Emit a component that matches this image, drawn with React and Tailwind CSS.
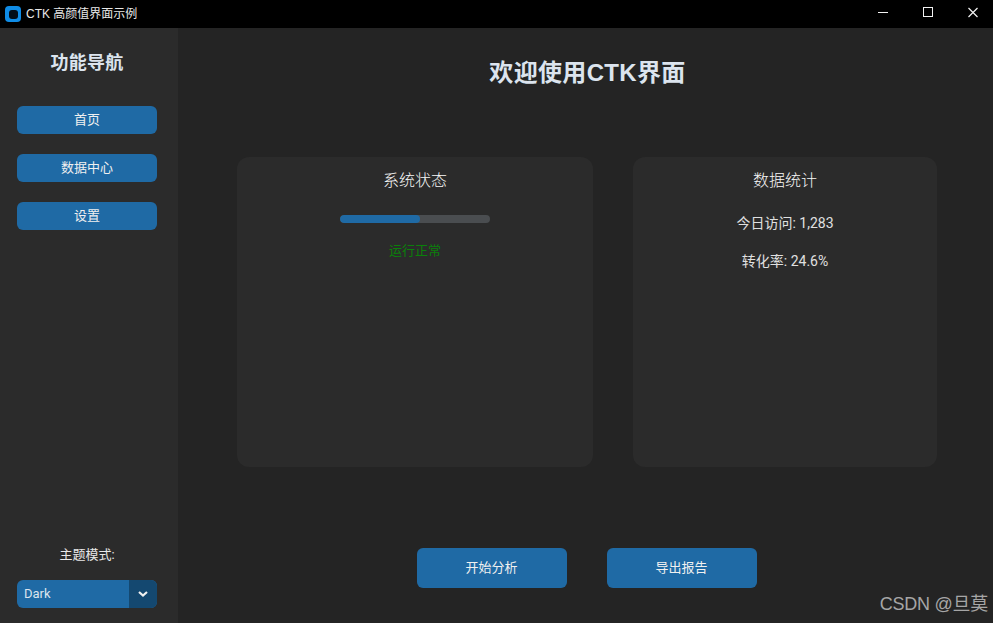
const SANS = "font-['Roboto','Noto_Sans_CJK_SC',sans-serif]";

function TitleBar() {
  return (
    <div className="flex h-7 items-center bg-black text-[#e8e8e8]">
      <div className="ml-[5px] flex h-[16px] w-[16px] items-center justify-center rounded-[4px] bg-[#0f8ce6]">
        <div className="h-[9px] w-[9px] rounded-[3px] bg-[#020d18]" />
      </div>
      <span className="ml-[5px] font-['Liberation_Sans','Noto_Sans_CJK_SC',sans-serif] text-[12px] leading-none">
        CTK 高颜值界面示例
      </span>
      <div className="ml-auto flex h-full items-center">
        <svg width="45" height="28" viewBox="0 0 45 28" stroke="#f2f2f2" fill="none">
          <path d="M15 12.5h10" />
        </svg>
        <svg width="45" height="28" viewBox="0 0 45 28" stroke="#f2f2f2" fill="none">
          <rect x="15.5" y="7.5" width="9" height="9" />
        </svg>
        <svg width="40" height="28" viewBox="0 0 40 28" stroke="#f2f2f2" strokeWidth="1.2" fill="none">
          <path d="M15.5 8l9 9M24.5 8l-9 9" />
        </svg>
      </div>
    </div>
  );
}

function NavButton({ label }) {
  return (
    <button className={`flex h-7 w-[140px] items-center justify-center rounded-md bg-[#1f6aa5] text-[13px] text-[#f0f0f0] ${SANS}`}>
      {label}
    </button>
  );
}

function Sidebar() {
  return (
    <aside className="flex w-[178px] shrink-0 flex-col items-center bg-[#2b2b2b] pr-1">
      <h2 className={`mt-[21px] text-[18px] font-bold leading-[27px] tracking-[0.3px] text-[#dce4ee] ${SANS}`}>功能导航</h2>
      <div className="mt-[30px] flex flex-col gap-5">
        <NavButton label="首页" />
        <NavButton label="数据中心" />
        <NavButton label="设置" />
      </div>
      <p className={`mt-auto text-[13px] leading-5 text-[#e8e8e8] ${SANS}`}>主题模式:</p>
      <div className="mb-[15px] mt-[15px] flex h-7 w-[140px] overflow-hidden rounded-md bg-[#1f6aa5]">
        <span className={`flex flex-1 items-center pl-[7px] text-[13px] text-[#dce4ee] ${SANS}`}>Dark</span>
        <span className="flex w-7 items-center justify-center bg-[#144870]">
          <svg width="10" height="6" viewBox="0 0 10 6" fill="none" stroke="#f0f0f0" strokeWidth="2.2">
            <path d="M1 1l4 3.5L9 1" />
          </svg>
        </span>
      </div>
    </aside>
  );
}

function StatusCard() {
  return (
    <section className="flex h-[310px] w-[356px] flex-col items-center rounded-xl bg-[#2b2b2b]">
      <h3 className={`mt-[12px] text-[16px] font-light leading-6 text-[#f8f8f8] ${SANS}`}>系统状态</h3>
      <div className="mt-[22px] h-2 w-[150px] overflow-hidden rounded-sm bg-[#4a4d50]">
        <div className="h-full w-[80px] rounded-sm bg-[#1f6aa5]" />
      </div>
      <p className={`mt-[18px] text-[13px] leading-5 text-[#0a800a] ${SANS}`}>运行正常</p>
    </section>
  );
}

function StatsCard() {
  return (
    <section className="flex h-[310px] w-[304px] flex-col items-center rounded-xl bg-[#2b2b2b]">
      <h3 className={`mt-[12px] text-[16px] font-light leading-6 text-[#f8f8f8] ${SANS}`}>数据统计</h3>
      <p className={`mt-[20px] text-[14px] leading-5 text-[#e0e0e0] ${SANS}`}>今日访问: 1,283</p>
      <p className={`mt-[18px] text-[14px] leading-5 text-[#e0e0e0] ${SANS}`}>转化率: 24.6%</p>
    </section>
  );
}

function ActionButton({ label }) {
  return (
    <button className={`flex h-10 w-[150px] items-center justify-center rounded-md bg-[#1f6aa5] text-[13px] text-[#f0f0f0] ${SANS}`}>
      {label}
    </button>
  );
}

export default function App() {
  return (
    <div className="relative flex h-[623px] w-[993px] flex-col overflow-hidden bg-[#242424]">
      <TitleBar />
      <div className="flex min-h-0 flex-1">
        <Sidebar />
        <main className="flex flex-1 flex-col items-center">
          <h1 className="mt-[27px] pl-[4px] font-['Liberation_Sans','Noto_Sans_CJK_SC',sans-serif] text-[24px] font-bold leading-9 tracking-[0.33px] text-[#dce4ee]">
            欢迎使用CTK界面
          </h1>
          <div className="mt-[66px] flex gap-10 self-start pl-[59px]">
            <StatusCard />
            <StatsCard />
          </div>
          <div className="mt-[81px] flex gap-10 pl-[2px]">
            <ActionButton label="开始分析" />
            <ActionButton label="导出报告" />
          </div>
        </main>
      </div>
      <span className="absolute bottom-[7px] right-[5px] font-['Liberation_Sans','Noto_Sans_CJK_SC',sans-serif] text-[18px] leading-6 tracking-[-0.25px] text-[#a6a6a6]">
        CSDN @旦莫
      </span>
    </div>
  );
}
